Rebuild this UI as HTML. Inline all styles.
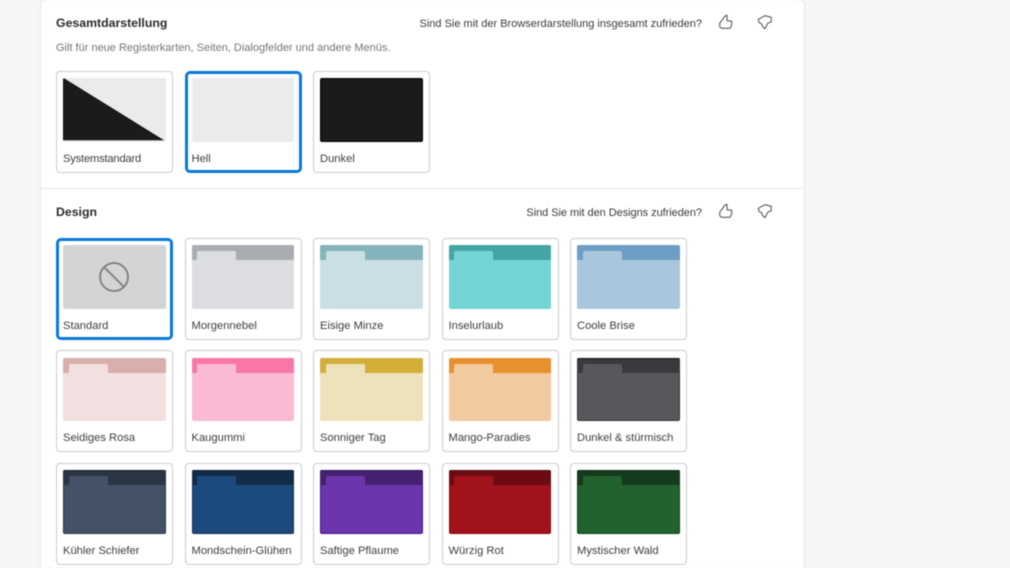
<!DOCTYPE html>
<html lang="de"><head><meta charset="utf-8"><title>Darstellung</title>
<style>
html,body{margin:0;padding:0;width:1010px;height:568px;overflow:hidden;background:#f6f6f6}
body{position:relative;font-family:"Liberation Sans",sans-serif;filter:blur(.4px)}
#panel{position:absolute;left:41px;top:0;width:763px;height:568px;background:#fff;border-radius:5px 5px 0 0;box-shadow:0 0 2px rgba(0,0,0,.16)}
#div{position:absolute;left:41px;top:188px;width:763px;height:1px;background:#e8e8e8}
.h{position:absolute;left:56px;font-size:12.3px;font-weight:bold;color:#2b2b2b;white-space:nowrap;line-height:16px}
.sub{position:absolute;left:56px;top:41px;font-size:11px;color:#757575;white-space:nowrap;line-height:14px}
.q{position:absolute;left:auto;right:308px;font-size:11px;color:#3a3a3a;white-space:nowrap;line-height:14px}
svg.i{position:absolute;width:16px;height:16px;overflow:visible;fill:none;stroke:#5a5a5a;stroke-width:1.1;stroke-linejoin:round}
.c{position:absolute;box-sizing:border-box;width:117px;height:102px;background:#fff;border:1px solid #ccc;border-radius:4px}
.c.s{border:3px solid #0a78d6;border-radius:5px}
.p{position:absolute;left:6.3px;top:6.3px;width:102.4px;height:63.3px;box-sizing:border-box;border-radius:2px;overflow:hidden}
.c.s .p{left:4.3px;top:4.3px}
.b{position:absolute;left:0;top:0;right:0;height:15px}
.t{position:absolute;left:5.5px;top:6px;width:39px;height:9px;border-radius:2px 2px 0 0}
.l{position:absolute;left:6px;top:80px;font-size:11.2px;line-height:14px;color:#3d3d3d;white-space:nowrap}
.c.s .l{left:4px;top:78px}
.d{outline-offset:-1px}
</style></head><body>
<div id="panel"></div><div id="div"></div>

<div class="h" style="top:15px">Gesamtdarstellung</div>
<div class="sub">Gilt für neue Registerkarten, Seiten, Dialogfelder und andere Menüs.</div>
<div class="q" style="top:17px">Sind Sie mit der Browserdarstellung insgesamt zufrieden?</div>
<svg class="i" style="left:718px;top:15px" viewBox="0 0 16 16"><path d="M1.700 8.300 7 1 9 .3V5.700L13.700 6.300V10L12 13.300H3.700L1.700 11.700Z"/></svg>
<svg class="i" style="left:756px;top:15px" viewBox="0 0 16 16"><path d="M2.300 4.300 9 .7 15.300 2.300 15.200 6.700 11.700 8.300 9 13.700 6.700 11.700 5.700 9 3 7.300Z"/></svg>

<div class="c" style="left:56px;top:71px"><div class="p" style="background:#ebebeb"><svg style="position:absolute;left:0;top:0" width="102.400" height="63.300" viewBox="0 0 102.400 63.300"><path d="M0 0 100 62H0Z" fill="#1b1b1b" stroke="#000" stroke-width=".6"/></svg></div><div class="l" style="letter-spacing:-.2px">Systemstandard</div></div>
<div class="c s" style="left:184.500px;top:71px"><div class="p" style="background:#ebebeb"></div><div class="l">Hell</div></div>
<div class="c" style="left:313px;top:71px"><div class="p" style="background:#1b1b1b;border:1px solid #000"></div><div class="l">Dunkel</div></div>

<div class="h" style="top:204px">Design</div>
<div class="q" style="top:206px;letter-spacing:-.05px">Sind Sie mit den Designs zufrieden?</div>
<svg class="i" style="left:718px;top:204px" viewBox="0 0 16 16"><path d="M1.700 8.300 7 1 9 .3V5.700L13.700 6.300V10L12 13.300H3.700L1.700 11.700Z"/></svg>
<svg class="i" style="left:756px;top:204px" viewBox="0 0 16 16"><path d="M2.300 4.300 9 .7 15.300 2.300 15.200 6.700 11.700 8.300 9 13.700 6.700 11.700 5.700 9 3 7.300Z"/></svg>

<div class="c s" style="left:56px;top:238px"><div class="p" style="background:#d4d4d4"><svg style="position:absolute;left:36.200px;top:16.600px" width="30" height="30" viewBox="0 0 30 30" fill="none" stroke="#7d7d7d" stroke-width="1.800"><circle cx="15" cy="15" r="14"/><path d="M5 5 25 25"/></svg></div><div class="l">Standard</div></div>

<div class="c" style="left:184.500px;top:238px"><div class="p" style="background:#dcdde1"><div class="b" style="background:#a9adb2"></div><div class="t" style="background:#dcdde1"></div></div><div class="l">Morgennebel</div></div>
<div class="c" style="left:313px;top:238px"><div class="p" style="background:#c9dfe3"><div class="b" style="background:#83b4bb"></div><div class="t" style="background:#c9dfe3"></div></div><div class="l">Eisige Minze</div></div>
<div class="c" style="left:441.500px;top:238px"><div class="p" style="background:#74d3d3"><div class="b" style="background:#45a5a5"></div><div class="t" style="background:#74d3d3"></div></div><div class="l">Inselurlaub</div></div>
<div class="c" style="left:570px;top:238px"><div class="p" style="background:#a8c6dc"><div class="b" style="background:#6c9fc3"></div><div class="t" style="background:#a8c6dc"></div></div><div class="l">Coole Brise</div></div>

<div class="c" style="left:56px;top:350.400px"><div class="p" style="background:#f1e0df"><div class="b" style="background:#d8afab"></div><div class="t" style="background:#f1e0df"></div></div><div class="l">Seidiges Rosa</div></div>
<div class="c" style="left:184.500px;top:350.400px"><div class="p" style="background:#fbbad3"><div class="b" style="background:#f977a8"></div><div class="t" style="background:#fbbad3"></div></div><div class="l">Kaugummi</div></div>
<div class="c" style="left:313px;top:350.400px"><div class="p" style="background:#eee2ba"><div class="b" style="background:#d3ae38"></div><div class="t" style="background:#eee2ba"></div></div><div class="l">Sonniger Tag</div></div>
<div class="c" style="left:441.500px;top:350.400px"><div class="p" style="background:#f1ca9f"><div class="b" style="background:#e88f2f"></div><div class="t" style="background:#f1ca9f"></div></div><div class="l">Mango-Paradies</div></div>
<div class="c" style="left:570px;top:350.400px"><div class="p d" style="background:#57585c;outline:1px solid rgba(0,0,0,.4)"><div class="b" style="background:#393a3e;border-top:1px solid #111;box-sizing:border-box"></div><div class="t" style="background:#57585c"></div></div><div class="l">Dunkel &amp; stürmisch</div></div>

<div class="c" style="left:56px;top:463px"><div class="p d" style="background:#445267;outline:1px solid rgba(0,0,0,.35)"><div class="b" style="background:#2b3644;border-top:1px solid #10151c;box-sizing:border-box"></div><div class="t" style="background:#445267"></div></div><div class="l">Kühler Schiefer</div></div>
<div class="c" style="left:184.500px;top:463px"><div class="p d" style="background:#1d4a7c;outline:1px solid rgba(0,0,30,.35)"><div class="b" style="background:#122b49;border-top:1px solid #07152b;box-sizing:border-box"></div><div class="t" style="background:#1d4a7c"></div></div><div class="l">Mondschein-Glühen</div></div>
<div class="c" style="left:313px;top:463px"><div class="p d" style="background:#6c35ad;outline:1px solid rgba(40,0,110,.6)"><div class="b" style="background:#45226f;border-top:1px solid #2c0c60;box-sizing:border-box"></div><div class="t" style="background:#6c35ad"></div></div><div class="l">Saftige Pflaume</div></div>
<div class="c" style="left:441.500px;top:463px"><div class="p d" style="background:#a2121b;outline:1px solid rgba(100,0,0,.4)"><div class="b" style="background:#6c0c12;border-top:1px solid #550a0e;box-sizing:border-box"></div><div class="t" style="background:#a2121b"></div></div><div class="l">Würzig Rot</div></div>
<div class="c" style="left:570px;top:463px"><div class="p d" style="background:#22622f;outline:1px solid rgba(0,50,10,.6)"><div class="b" style="background:#163a1d;border-top:1px solid #0c2a12;box-sizing:border-box"></div><div class="t" style="background:#22622f"></div></div><div class="l">Mystischer Wald</div></div>
</body></html>
